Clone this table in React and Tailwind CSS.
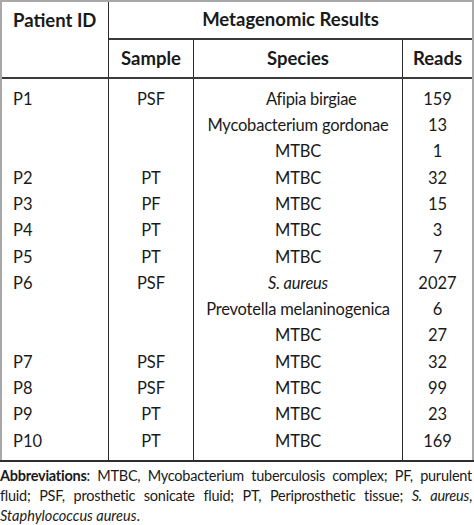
import React from "react";

const rows = [
  ["P1", "PSF", "Afipia birgiae", "159", false, true],
  ["", "", "Mycobacterium gordonae", "13"],
  ["", "", "MTBC", "1"],
  ["P2", "PT", "MTBC", "32"],
  ["P3", "PF", "MTBC", "15"],
  ["P4", "PT", "MTBC", "3"],
  ["P5", "PT", "MTBC", "7"],
  ["P6", "PSF", "S. aureus", "2027", true],
  ["", "", "Prevotella melaninogenica", "6"],
  ["", "", "MTBC", "27"],
  ["P7", "PSF", "MTBC", "32"],
  ["P8", "PSF", "MTBC", "99"],
  ["P9", "PT", "MTBC", "23"],
  ["P10", "PT", "MTBC", "169"],
];

export default function App() {
  return (
    <div className="w-[474px] h-[525px] bg-white text-[#1a1a1a] font-['Lato',sans-serif] overflow-hidden">
      <div className="border-l-2 border-r-2 border-t-2 border-[#a8a8a8]">
        {/* header */}
        <div className="flex h-[77px] border-b-2 border-[#3a3a3a]">
          <div className="w-[106px] h-[38px] flex items-center pl-[11px] font-bold text-[18.5px]">
            Patient ID
          </div>
          <div className="flex-1 flex flex-col border-l border-[#2a2a2a]">
            <div className="h-[38px] flex items-center justify-center border-b-2 border-[#3a3a3a] font-bold text-[18.5px]">
              Metagenomic Results
            </div>
            <div className="flex-1 flex font-bold text-[18.5px]">
              <div className="w-[84px] flex items-center justify-center">Sample</div>
              <div className="w-[209px] flex items-center justify-center border-l border-[#2a2a2a]">Species</div>
              <div className="flex-1 flex items-center justify-center border-l border-[#2a2a2a]">Reads</div>
            </div>
          </div>
        </div>
        {/* body */}
        <div className="flex text-[16.5px]">
          <div className="w-[106px] flex flex-col pt-[7px] pb-[6px]">
            {rows.map((r, i) => (
              <div key={i} className="h-[26.3px] flex items-center pl-[11px]">{r[0]}</div>
            ))}
          </div>
          <div className="w-[85px] flex flex-col pt-[7px] pb-[6px] border-l border-[#2a2a2a]">
            {rows.map((r, i) => (
              <div key={i} className="h-[26.3px] flex items-center justify-center">{r[1]}</div>
            ))}
          </div>
          <div className="w-[209px] flex flex-col pt-[7px] pb-[6px] border-l border-[#2a2a2a]">
            {rows.map((r, i) =>
              r[5] ? (
                <div key={i} className="h-[26.3px] flex items-center justify-start pl-[72px] tracking-[-0.3px]">{r[2]}</div>
              ) : r[4] ? (
                <div key={i} className="h-[26.3px] flex items-center justify-center tracking-[-0.2px] italic">{r[2]}</div>
              ) : (
                <div key={i} className="h-[26.3px] flex items-center justify-center tracking-[-0.2px]">{r[2]}</div>
              )
            )}
          </div>
          <div className="flex-1 flex flex-col pt-[7px] pb-[6px] border-l border-[#2a2a2a]">
            {rows.map((r, i) => (
              <div key={i} className="h-[26.3px] flex items-center justify-center">{r[3]}</div>
            ))}
          </div>
        </div>
      </div>
      <div className="h-[2px] bg-[#2e2e2e]"></div>
      {/* footnote */}
      <div className="pt-[4px] pr-[2px] text-[14.5px] leading-[20px] tracking-[-0.25px]">
        <div className="whitespace-nowrap text-justify [text-align-last:justify] [word-spacing:-1px]">
          <span className="font-bold">Abbreviations</span>: MTBC, Mycobacterium tuberculosis complex; PF, purulent
        </div>
        <div className="whitespace-nowrap text-justify [text-align-last:justify] [word-spacing:-1px]">
          fluid; PSF, prosthetic sonicate fluid; PT, Periprosthetic tissue; <span className="italic">S. aureus</span>,
        </div>
        <div className="tracking-normal">
          <span className="italic">Staphylococcus aureus</span>.
        </div>
      </div>
    </div>
  );
}
